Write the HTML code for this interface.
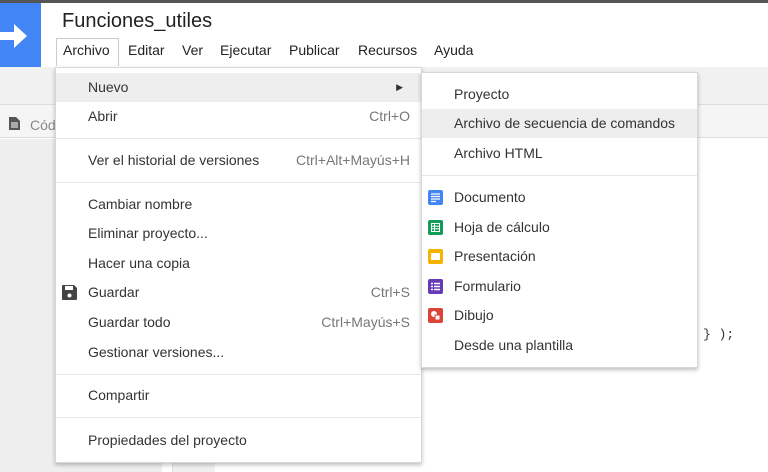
<!DOCTYPE html>
<html><head><meta charset="utf-8"><style>
*{margin:0;padding:0;box-sizing:border-box}
svg{display:block}
body{width:768px;height:472px;overflow:hidden;position:relative;background:#fff;font-family:"Liberation Sans",Arial,sans-serif;color:#222}
.abs{position:absolute}
.menu{position:absolute;background:#fff;box-shadow:0 2px 4px rgba(0,0,0,.25);border:1px solid #d8d8d8}
.it{position:absolute;left:0;right:0;height:29px;line-height:29px;font-size:14px;color:#333}
.it .sc{position:absolute;right:11px;top:0;color:#777}
.sep{position:absolute;left:0;right:0;height:1px;background:#e6e6e6}
.ic{position:absolute;width:15px;height:15px;border-radius:2px;top:7px;left:6px;overflow:hidden}
</style></head><body>
<div class="abs" style="left:0;top:0;width:768px;height:3px;background:#555"></div>
<div class="abs" style="left:0;top:3px;width:41px;height:64px;background:#4285f4">
<svg width="41" height="64"><path d="M0 29h14v-8l13 12-13 12v-8H0z" fill="#fff"/></svg></div>
<div class="abs" style="left:62px;top:10px;font-size:20px;color:#222">Funciones_utiles</div>
<div class="abs" style="left:56px;top:38px;width:63px;height:28px;border:1px solid #ccc;border-bottom:none;background:#fff"></div>
<div class="abs" style="top:42px;left:0;font-size:14px;color:#222;white-space:nowrap">
<span class="abs" style="left:63px">Archivo</span><span class="abs" style="left:128px">Editar</span><span class="abs" style="left:182px">Ver</span><span class="abs" style="left:220px">Ejecutar</span><span class="abs" style="left:289px">Publicar</span><span class="abs" style="left:358px">Recursos</span><span class="abs" style="left:434px">Ayuda</span></div>
<div class="abs" style="left:0;top:67px;width:768px;height:38px;background:#f1f1f1;border-bottom:1px solid #ddd"></div>
<div class="abs" style="left:0;top:105px;width:768px;height:33px;background:#f5f5f5;border-bottom:1px solid #ddd"></div>
<svg class="abs" style="left:9px;top:117px" width="11" height="13"><path d="M0 0h7l4 4v9H0z" fill="#555"/><path d="M2 6h7M2 8h7M2 10h7" stroke="#fff"/></svg>
<div class="abs" style="left:30px;top:117px;font-size:14px;color:#888">Cód</div>
<div class="abs" style="left:0;top:139px;width:162px;height:333px;background:#eee"></div>
<div class="abs" style="left:172px;top:139px;width:43px;height:333px;background:#f0f0f0;border-left:1px solid #ddd"></div>
<div class="abs" style="left:703px;top:327px;font-family:'Liberation Mono',monospace;font-size:13px;color:#333">} );</div>

<div class="menu" style="left:55px;top:67px;width:367px;height:396px">
<div class="it" style="top:5px;background:#eee;padding-left:32px">Nuevo<span class="sc" style="font-size:9px;color:#333;right:18px">&#9654;</span></div>
<div class="it" style="top:34px;padding-left:32px">Abrir<span class="sc">Ctrl+O</span></div>
<div class="sep" style="top:70px"></div>
<div class="it" style="top:78px;padding-left:32px">Ver el historial de versiones<span class="sc">Ctrl+Alt+Mayús+H</span></div>
<div class="sep" style="top:114px"></div>
<div class="it" style="top:122px;padding-left:32px">Cambiar nombre</div>
<div class="it" style="top:151px;padding-left:32px">Eliminar proyecto...</div>
<div class="it" style="top:181px;padding-left:32px">Hacer una copia</div>
<div class="it" style="top:210px;padding-left:32px"><svg class="abs" style="left:6px;top:7px" width="15" height="15"><path d="M0 1a1 1 0 0 1 1-1h11l3 3v11a1 1 0 0 1-1 1H1a1 1 0 0 1-1-1z" fill="#444"/><rect x="3" y="1" width="8" height="4" fill="#fff"/><circle cx="7.5" cy="10.5" r="2" fill="#fff"/></svg>Guardar<span class="sc">Ctrl+S</span></div>
<div class="it" style="top:240px;padding-left:32px">Guardar todo<span class="sc">Ctrl+Mayús+S</span></div>
<div class="it" style="top:270px;padding-left:32px">Gestionar versiones...</div>
<div class="sep" style="top:306px"></div>
<div class="it" style="top:313px;padding-left:32px">Compartir</div>
<div class="sep" style="top:349px"></div>
<div class="it" style="top:358px;padding-left:32px">Propiedades del proyecto</div>
</div>

<div class="menu" style="left:421px;top:72px;width:277px;height:296px">
<div class="it" style="top:7px;padding-left:32px">Proyecto</div>
<div class="it" style="top:36px;background:#eee;padding-left:32px">Archivo de secuencia de comandos</div>
<div class="it" style="top:66px;padding-left:32px">Archivo HTML</div>
<div class="sep" style="top:102px"></div>
<div class="it" style="top:110px;padding-left:32px"><span class="ic" style="background:#4285f4"><svg width="15" height="15"><path d="M3 4h9M3 6.5h9M3 9h9M3 11.5h5" stroke="#fff" stroke-width="1.2"/></svg></span>Documento</div>
<div class="it" style="top:140px;padding-left:32px"><span class="ic" style="background:#0f9d58"><svg width="15" height="15"><rect x="3.5" y="3.5" width="8" height="8" fill="none" stroke="#fff"/><path d="M3.5 6.2h8M3.5 8.8h8M6.5 3.5v8" stroke="#fff"/></svg></span>Hoja de cálculo</div>
<div class="it" style="top:169px;padding-left:32px"><span class="ic" style="background:#f4b400"><svg width="15" height="15"><rect x="3" y="4" width="9" height="7" fill="#fff"/></svg></span>Presentación</div>
<div class="it" style="top:199px;padding-left:32px"><span class="ic" style="background:#673ab7"><svg width="15" height="15"><path d="M3 4.5h2M3 7.5h2M3 10.5h2M6 4.5h6M6 7.5h6M6 10.5h6" stroke="#fff" stroke-width="1.4"/></svg></span>Formulario</div>
<div class="it" style="top:228px;padding-left:32px"><span class="ic" style="background:#db4437"><svg width="15" height="15"><circle cx="6" cy="6" r="3" fill="#fff"/><rect x="7" y="7" width="5" height="5" fill="#fff" stroke="#db4437"/></svg></span>Dibujo</div>
<div class="it" style="top:258px;padding-left:32px">Desde una plantilla</div>
</div>
</body></html>
